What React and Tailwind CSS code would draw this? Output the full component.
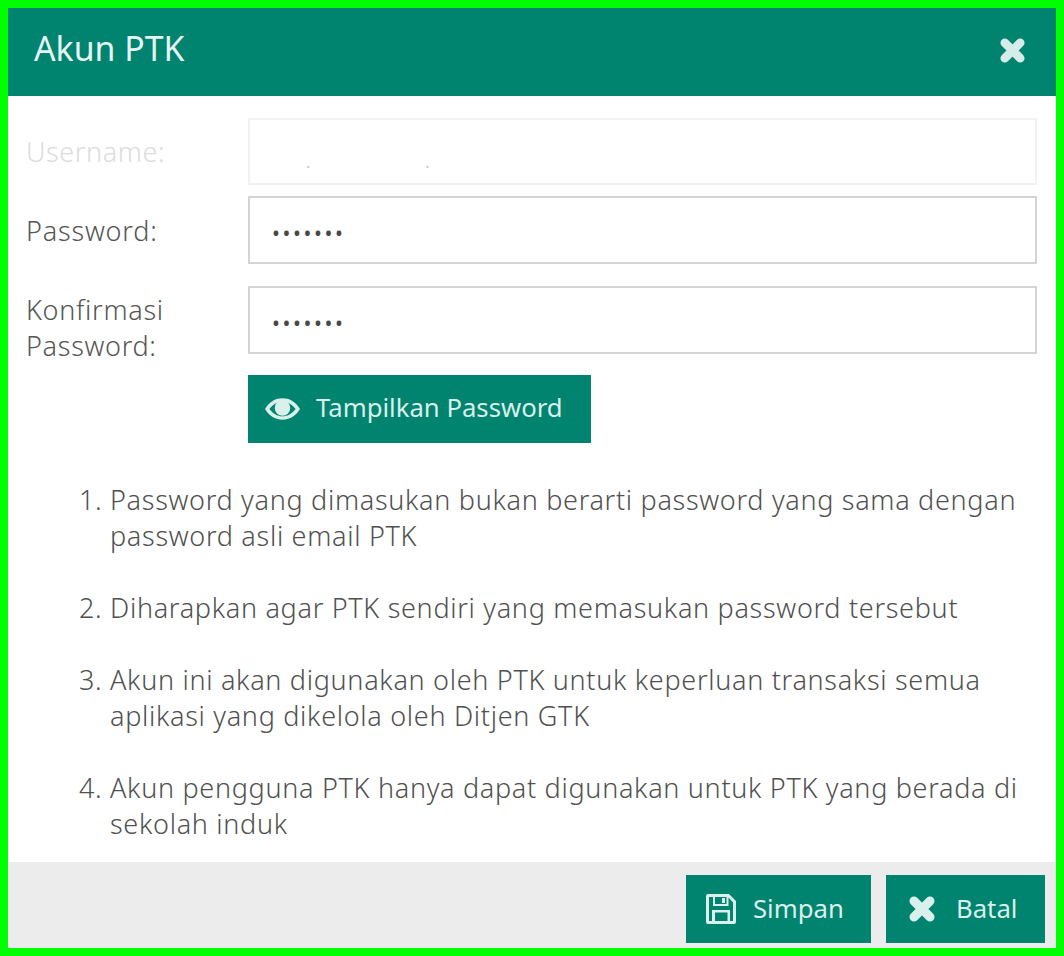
import React from "react";

const items = [
  "Password yang dimasukan bukan berarti password yang sama dengan password asli email PTK",
  "Diharapkan agar PTK sendiri yang memasukan password tersebut",
  "Akun ini akan digunakan oleh PTK untuk keperluan transaksi semua aplikasi yang dikelola oleh Ditjen GTK",
  "Akun pengguna PTK hanya dapat digunakan untuk PTK yang berada di sekolah induk",
];

function XIcon({ className }) {
  return (
    <svg viewBox="0 0 28 28" className={className} fill="none" stroke="currentColor" strokeWidth="9" strokeLinecap="round">
      <path d="M6 6 L22 22 M22 6 L6 22" />
    </svg>
  );
}

function EyeIcon({ className }) {
  return (
    <svg viewBox="0 0 36 24" className={className} fill="currentColor">
      <path fillRule="evenodd" d="M0 12 C5 4 11 1 18 1 C25 1 31 4 36 12 C31 20 25 23 18 23 C11 23 5 20 0 12 Z M4.5 12 C8 16.5 12.5 19.5 18 19.5 C23.5 19.5 28 16.5 31.5 12 C28 7.5 23.5 4.5 18 4.5 C12.5 4.5 8 7.5 4.5 12 Z" />
      <circle cx="18" cy="11" r="8" />
    </svg>
  );
}

function SaveIcon({ className }) {
  return (
    <svg viewBox="0 0 30 30" className={className} fill="currentColor">
      <path fillRule="evenodd" d="M2 0 H23 L30 7 V28 A2 2 0 0 1 28 30 H2 A2 2 0 0 1 0 28 V2 A2 2 0 0 1 2 0 Z M3 3 V27 H6 V16 H24 V27 H27 V8.5 L22.5 3.5 V12 H7 V3 Z M9 3 V10 H20.5 V3 Z M9 18.5 V27 H21.5 V18.5 Z" />
      <rect x="16" y="4" width="3" height="5" />
    </svg>
  );
}

export default function App() {
  return (
    <div className="w-[1064px] h-[956px] border-8 border-[#00ff00] bg-white flex flex-col font-['Noto_Sans','Open_Sans',sans-serif] text-[#555] overflow-hidden">
      <header className="h-[88px] shrink-0 bg-[#00836f] flex items-center justify-between pl-[26px] pr-[30px] text-[#e6f5f2]">
        <h1 className="text-[33.8px] leading-none pb-[7px]">Akun PTK</h1>
        <XIcon className="w-[27px] h-[27px] text-[#d5ece8] mb-[3px]" />
      </header>

      <main className="flex-1 min-h-0 pl-[18px] pr-[19px] pt-[22px]">
        <div className="flex h-[67px] items-center text-[#dcdcdc]">
          <label className="w-[222px] text-[27px] font-light tracking-[0.6px] pt-[2px] shrink-0">Username:</label>
          <div className="flex-1 h-full border-2 border-[#f2f2f2] pl-[56px] pt-[34px] flex text-[#c8c8c8] text-[16px] leading-none">
            <span>.</span>
            <span className="ml-[115px]">.</span>
          </div>
        </div>

        <div className="flex h-[68px] items-center mt-[11px]">
          <label className="w-[222px] text-[27px] font-light tracking-[0.8px] pt-[2px] shrink-0">Password:</label>
          <div className="flex-1 h-full border-2 border-[#d4d4d4] pl-[22px] pt-[7px] flex items-center text-[#484848] text-[21px] tracking-[2.6px]">
            <span className="leading-none">•••••••</span>
          </div>
        </div>

        <div className="flex h-[68px] items-start mt-[22px]">
          <label className="w-[222px] text-[27px] font-light tracking-[0.7px] leading-[36px] pt-[6px] shrink-0">Konfirmasi<br />Password:</label>
          <div className="flex-1 h-full border-2 border-[#d4d4d4] pl-[22px] pt-[7px] flex items-center text-[#484848] text-[21px] tracking-[2.6px]">
            <span className="leading-none">•••••••</span>
          </div>
        </div>

        <div className="ml-[222px] mt-[21px]">
          <button className="w-[343px] h-[68px] bg-[#00836f] text-[#d9f0ec] flex items-center pl-[17px] text-[25.7px]">
            <EyeIcon className="w-[35px] h-[24px] mr-[16px]" />
            <span className="pb-[1px] whitespace-nowrap">Tampilkan Password</span>
          </button>
        </div>

        <ol className="list-decimal mt-[39px] pl-[84px] text-[27px] leading-[36px] tracking-[0.7px] text-[#505050] font-light">
          {items.map((t) => (
            <li key={t} className="mb-[36px]">{t}</li>
          ))}
        </ol>
      </main>

      <footer className="h-[86px] shrink-0 bg-[#ececec] flex justify-end items-start gap-[15px] pt-[13px] pr-[11px]">
        <button className="w-[185px] h-[68px] bg-[#00836f] text-[#d9f0ec] flex items-center pl-[20px] text-[25.7px]">
          <SaveIcon className="w-[30px] h-[30px] mr-[17px]" />
          <span>Simpan</span>
        </button>
        <button className="w-[159px] h-[68px] bg-[#00836f] text-[#d9f0ec] flex items-center pl-[22px] text-[25.7px]">
          <XIcon className="w-[28px] h-[28px] mr-[20px]" />
          <span>Batal</span>
        </button>
      </footer>
    </div>
  );
}
